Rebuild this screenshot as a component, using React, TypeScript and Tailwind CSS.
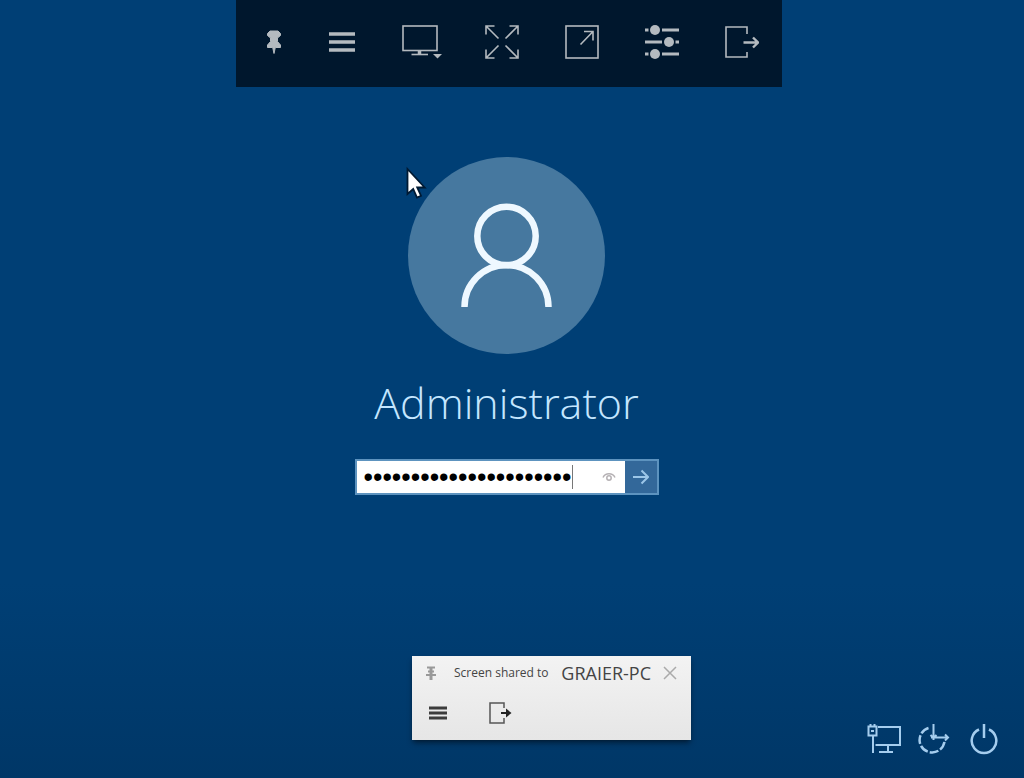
import { useState } from 'react'
import type { ReactNode } from 'react'

interface IconProps {
  width: number
  height: number
  strokeWidth?: number
  children: ReactNode
}

function Icon({ width, height, strokeWidth = 2, children }: IconProps) {
  return (
    <svg
      xmlns="http://www.w3.org/2000/svg"
      width={width}
      height={height}
      viewBox={`0 0 ${width} ${height}`}
      fill="none"
      stroke="currentColor"
      strokeWidth={strokeWidth}
      aria-hidden="true"
    >
      {children}
    </svg>
  )
}

const toolbarItems = [
  {
    label: 'Menu',
    icon: (
      <Icon width={26} height={22} strokeWidth={3.6}>
        <path d="M0 3h26M0 11h26M0 19h26" />
      </Icon>
    ),
  },
  {
    label: 'Select monitor',
    icon: (
      <Icon width={40} height={34} strokeWidth={1.6}>
        <rect x="1" y="1" width="34" height="24.5" />
        <path d="M9.5 29.5h16.5" />
        <path d="M17.5 26v3" strokeWidth={3.5} />
        <path d="M31 29h9l-4.500 4.500z" fill="currentColor" stroke="none" />
      </Icon>
    ),
  },
  {
    label: 'Full screen',
    icon: (
      <Icon width={34} height={34} strokeWidth={1.6}>
        <path d="M1 9.500V1h8.500M1.500 1.500l12 12M24.500 1H33v8.500M32.500 1.500l-12 12M1 24.500V33h8.500M1.500 32.500l12-12M24.500 33H33v-8.500M32.500 32.500l-12-12" />
      </Icon>
    ),
  },
  {
    label: 'Scale',
    icon: (
      <Icon width={34} height={34} strokeWidth={1.6}>
        <rect x="1" y="1" width="32" height="32" />
        <path d="M15.500 19.500L28 6.500M19 6.500h9v9" />
      </Icon>
    ),
  },
  {
    label: 'Settings',
    icon: (
      <Icon width={34} height={34} strokeWidth={3}>
        <path d="M0 5h3.500M17 5h17M0 17h17M30.500 17H34M0 29h3.500M17 29h17" />
        <g fill="currentColor" stroke="none">
          <circle cx="10" cy="5" r="5" />
          <circle cx="24" cy="17" r="5" />
          <circle cx="10" cy="29" r="5" />
        </g>
      </Icon>
    ),
  },
  {
    label: 'Disconnect',
    icon: (
      <Icon width={34} height={34} strokeWidth={1.6}>
        <path d="M22 9V2H1v30h21v-5" />
        <path d="M18.500 17.500H32M28 12.500l5 5-5 5" strokeWidth={2.400} />
      </Icon>
    ),
  },
]

const systemItems = [
  {
    label: 'Network',
    icon: (
      <Icon width={34} height={30}>
        <path d="M11 3h22v18H8.500M21 21v6M12 28h14M6 12v17" />
        <path d="M1.500 2.500h8v9h-8zM3.500 0v3M7.500 0v3M4 7h3" />
      </Icon>
    ),
  },
  {
    label: 'Ease of access',
    icon: (
      <Icon width={32} height={32}>
        <path d="M15.500 1v16M12.500 12l3 3 3-3M13 14.500h17M27 11.500l3 3-3 3" />
        <path
          d="M10.500 5A12.500 12.500 0 1 0 26.500 18.500"
          strokeWidth={2.500}
          strokeDasharray="9 2"
        />
      </Icon>
    ),
  },
  {
    label: 'Power',
    icon: (
      <Icon width={28} height={32} strokeWidth={2.500}>
        <path d="M14 1v14M9 6.500a12.300 12.300 0 1 0 10 0" />
      </Icon>
    ),
  },
]

function Toolbar() {
  return (
    <header className="flex justify-center pr-[6px]">
      <nav
        aria-label="Session"
        className="flex h-[87px] items-center bg-[#00172d] pb-[3px] pl-[10px] text-[#b4babf]"
      >
        <button type="button" aria-label="Pin toolbar" className="flex h-14 w-14 items-center justify-center">
          <Icon width={16} height={24} strokeWidth={1}>
            <path
              d="M4 1h8l2.500 2.500v2L11.500 8v3.500l3 3.500v2.500H9.300L8 23.500l-1.300-6H1.500V15l3-3.500V8l-3-2.500v-2z"
              fill="currentColor"
            />
          </Icon>
        </button>
        {toolbarItems.map((item) => (
          <button
            key={item.label}
            type="button"
            aria-label={item.label}
            className="flex h-14 w-20 items-center justify-center"
          >
            {item.icon}
          </button>
        ))}
      </nav>
    </header>
  )
}

function Avatar() {
  return (
    <div className="relative h-[197px] w-[197px] rounded-full bg-[#46789f] text-[#eef8ff]">
      <Icon width={197} height={197} strokeWidth={6.500}>
        <circle cx="98.500" cy="79" r="29.200" />
        <path d="M56.500 150a42 42 0 0 1 84 0" />
      </Icon>
      {/* Mouse pointer */}
      <div className="absolute -left-1 top-2">
        <svg width="24" height="36" viewBox="0 0 24 36" aria-hidden="true">
          <path
            d="M3.500 4v25l5.700-5 3.800 8.500 4-1.800-3.800-8.200h7.500z"
            fill="#fff"
            stroke="#001a33"
            strokeWidth="1.800"
          />
        </svg>
      </div>
    </div>
  )
}

function PasswordForm() {
  const [password, setPassword] = useState('x'.repeat(22))
  const [visible, setVisible] = useState(false)

  return (
    <form
      className="mt-6 flex h-9 w-[304px] border-2 border-[#5d93bf] bg-white"
      onSubmit={(e) => e.preventDefault()}
    >
      <input
        type={visible ? 'text' : 'password'}
        aria-label="Password"
        value={password}
        onChange={(e) => setPassword(e.target.value)}
        className="ml-[7px] h-8 w-[208px] font-['Liberation_Sans',sans-serif] text-[27px] leading-8 text-black outline-none"
      />
      <span className="mt-1 h-6 w-px bg-[#777]" />
      <button
        type="button"
        aria-label="Show password"
        onClick={() => setVisible(!visible)}
        className="ml-auto flex w-8 items-center justify-center text-[#b5b1b4]"
      >
        <Icon width={14} height={10} strokeWidth={1.500}>
          <path d="M1 5.500C3.500 0.500 10.500 0.500 13 5.500" />
          <circle cx="7" cy="6" r="2.200" />
        </Icon>
      </button>
      <button
        type="submit"
        aria-label="Submit"
        className="flex w-8 items-center justify-center bg-[#33689a] text-[#9cc6e8]"
      >
        <Icon width={16} height={16}>
          <path d="M0 8h15M8.500 1.500L15 8l-6.500 6.500" />
        </Icon>
      </button>
    </form>
  )
}

function ShareWindow() {
  return (
    <section
      aria-label="Screen sharing"
      className="absolute bottom-[38px] left-[412px] w-[279px] bg-linear-to-b from-[#f3f3f3] to-[#e6e6e6] shadow-md shadow-black/40"
    >
      <div className="flex h-[34px] items-center pl-[14px] text-[#444]">
        <button type="button" aria-label="Pin" className="text-[#999]">
          <Icon width={10} height={14}>
            <path d="M1 1.500h8M2 5.500h6M0 9h10" />
            <path d="M5 1v13" strokeWidth={3} />
          </Icon>
        </button>
        <p className="ml-[18px] flex w-[197px] items-center justify-between whitespace-nowrap">
          <span className="text-[12px]">Screen shared to</span>
          <span className="text-[18px]">GRAIER-PC</span>
        </p>
        <button type="button" aria-label="Close" className="ml-3 text-[#aaa]">
          <Icon width={14} height={14} strokeWidth={1.500}>
            <path d="M1 1l12 12M13 1L1 13" />
          </Icon>
        </button>
      </div>
      <div className="flex h-[50px] items-center gap-[42px] pb-1 pl-[17px]">
        <button type="button" aria-label="Menu" className="text-[#3c3c3c]">
          <Icon width={18} height={14} strokeWidth={3}>
            <path d="M0 2h18M0 7h18M0 12h18" />
          </Icon>
        </button>
        <button type="button" aria-label="Stop sharing" className="text-[#555]">
          <Icon width={24} height={22} strokeWidth={1.500}>
            <path d="M15 6V1H1v20h14v-5" />
            <path d="M12 11h9" stroke="#222" strokeWidth={2} />
            <path d="M17 6.500l5.500 4.500-5.500 4.500z" fill="#222" stroke="none" />
          </Icon>
        </button>
      </div>
    </section>
  )
}

export default function App() {
  return (
    <div className="relative flex min-h-screen flex-col bg-linear-to-b from-[#003f75] from-75% to-[#003767] font-['Open_Sans','Noto_Sans',sans-serif]">
      <Toolbar />

      <main className="flex flex-col items-center pt-[70px] pr-[11px]">
        <Avatar />
        <h1 className="mt-4 text-[43px] leading-[65px] font-light text-[#c4e6ff]">
          Administrator
        </h1>
        <PasswordForm />
      </main>

      <ShareWindow />

      <footer className="mt-auto flex justify-end pr-[15px] pb-[19px] text-[#a5cdee]">
        {systemItems.map((item) => (
          <button
            key={item.label}
            type="button"
            aria-label={item.label}
            className="flex h-10 w-[50px] items-center justify-center"
          >
            {item.icon}
          </button>
        ))}
      </footer>
    </div>
  )
}
